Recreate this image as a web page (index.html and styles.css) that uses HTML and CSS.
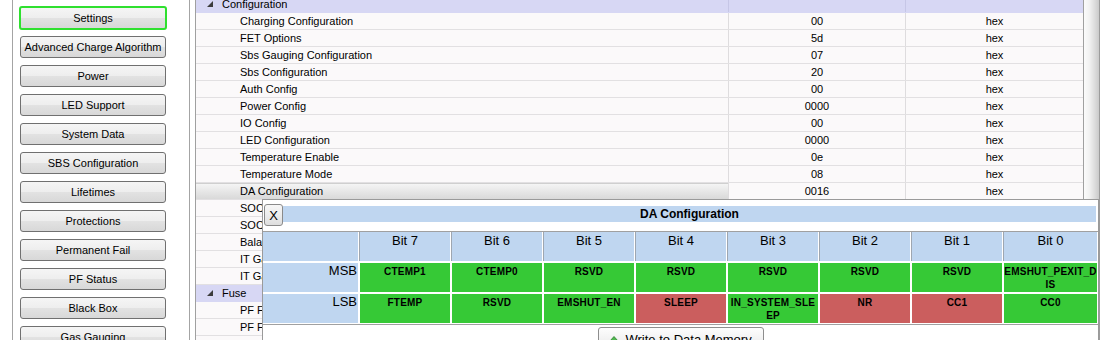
FILE: index.html
```html
<!DOCTYPE html>
<html>
<head>
<meta charset="utf-8">
<title>Data Memory</title>
<link rel="stylesheet" href="styles.css">
</head>
<body>
<div class="app">
  <nav class="sidebar">
    <button class="btn focus">Settings</button>
    <button class="btn">Advanced Charge Algorithm</button>
    <button class="btn">Power</button>
    <button class="btn">LED Support</button>
    <button class="btn">System Data</button>
    <button class="btn">SBS Configuration</button>
    <button class="btn">Lifetimes</button>
    <button class="btn">Protections</button>
    <button class="btn">Permanent Fail</button>
    <button class="btn">PF Status</button>
    <button class="btn">Black Box</button>
    <button class="btn">Gas Gauging</button>
  </nav>
  <div class="main">
    <div class="table">
      <div class="row section"><div class="cell name"><svg class="tri" width="6" height="6" viewBox="0 0 6 6"><polygon points="6,0 6,6 0,6" fill="#3c3c3c"/></svg>Configuration</div><div class="cell val"></div><div class="cell unit"></div></div>
      <div class="row"><div class="cell name">Charging Configuration</div><div class="cell val">00</div><div class="cell unit">hex</div></div>
      <div class="row"><div class="cell name">FET Options</div><div class="cell val">5d</div><div class="cell unit">hex</div></div>
      <div class="row"><div class="cell name">Sbs Gauging Configuration</div><div class="cell val">07</div><div class="cell unit">hex</div></div>
      <div class="row"><div class="cell name">Sbs Configuration</div><div class="cell val">20</div><div class="cell unit">hex</div></div>
      <div class="row"><div class="cell name">Auth Config</div><div class="cell val">00</div><div class="cell unit">hex</div></div>
      <div class="row"><div class="cell name">Power Config</div><div class="cell val">0000</div><div class="cell unit">hex</div></div>
      <div class="row"><div class="cell name">IO Config</div><div class="cell val">00</div><div class="cell unit">hex</div></div>
      <div class="row"><div class="cell name">LED Configuration</div><div class="cell val">0000</div><div class="cell unit">hex</div></div>
      <div class="row"><div class="cell name">Temperature Enable</div><div class="cell val">0e</div><div class="cell unit">hex</div></div>
      <div class="row"><div class="cell name">Temperature Mode</div><div class="cell val">08</div><div class="cell unit">hex</div></div>
      <div class="row selected"><div class="cell name">DA Configuration</div><div class="cell val">0016</div><div class="cell unit">hex</div></div>
      <div class="row"><div class="cell name">SOC Flag Config A</div><div class="cell val">0c8e</div><div class="cell unit">hex</div></div>
      <div class="row"><div class="cell name">SOC Flag Config B</div><div class="cell val">8c</div><div class="cell unit">hex</div></div>
      <div class="row"><div class="cell name">Balancing Configuration</div><div class="cell val">01</div><div class="cell unit">hex</div></div>
      <div class="row"><div class="cell name">IT Gauging Configuration</div><div class="cell val">d4fe</div><div class="cell unit">hex</div></div>
      <div class="row"><div class="cell name">IT Gauging Ext</div><div class="cell val">6e</div><div class="cell unit">hex</div></div>
      <div class="row section"><div class="cell name"><svg class="tri" width="6" height="6" viewBox="0 0 6 6"><polygon points="6,0 6,6 0,6" fill="#3c3c3c"/></svg>Fuse</div><div class="cell val"></div><div class="cell unit"></div></div>
      <div class="row"><div class="cell name">PF Fuse Min Voltage</div><div class="cell val">3500</div><div class="cell unit">mV</div></div>
      <div class="row"><div class="cell name">PF Fuse Blow Timeout</div><div class="cell val">30</div><div class="cell unit">s</div></div>
      <div class="row"><div class="cell name">PF Fuse Config</div><div class="cell val">00</div><div class="cell unit">hex</div></div>
    </div>
  </div>
  <div class="scroll"></div>
</div>

<div class="popup">
  <div class="ptitle">
    <button class="xbtn">X</button>
    <div class="pband">DA Configuration</div>
  </div>
  <div class="bits">
    <div class="hcell first"></div>
    <div class="hcell">Bit 7</div>
    <div class="hcell">Bit 6</div>
    <div class="hcell">Bit 5</div>
    <div class="hcell">Bit 4</div>
    <div class="hcell">Bit 3</div>
    <div class="hcell">Bit 2</div>
    <div class="hcell">Bit 1</div>
    <div class="hcell">Bit 0</div>

    <div class="rlabel">MSB</div>
    <div class="dcell g">CTEMP1</div>
    <div class="dcell g">CTEMP0</div>
    <div class="dcell g">RSVD</div>
    <div class="dcell g">RSVD</div>
    <div class="dcell g">RSVD</div>
    <div class="dcell g">RSVD</div>
    <div class="dcell g">RSVD</div>
    <div class="dcell g">EMSHUT_PEXIT_DIS</div>

    <div class="rlabel">LSB</div>
    <div class="dcell g">FTEMP</div>
    <div class="dcell g">RSVD</div>
    <div class="dcell g">EMSHUT_EN</div>
    <div class="dcell r">SLEEP</div>
    <div class="dcell g">IN_SYSTEM_SLEEP</div>
    <div class="dcell r">NR</div>
    <div class="dcell r">CC1</div>
    <div class="dcell g">CC0</div>
  </div>
  <div class="pfoot">
    <button class="wbtn"><svg class="wicon" width="10" height="11" viewBox="0 0 10 11"><polygon points="5,0.5 9.5,5.5 6.8,5.5 6.8,10.5 3.2,10.5 3.2,5.5 0.5,5.5" fill="#4fb84f" stroke="#2d7f2d" stroke-width="0.8"/></svg><span>Write to Data Memory</span></button>
  </div>
</div>
</body>
</html>
```

FILE: styles.css
```css
html, body {
  margin: 0;
  padding: 0;
}

body {
  width: 1106px;
  height: 340px;
  overflow: hidden;
  position: relative;
  background: #ffffff;
  font-family: "Liberation Sans", Arial, sans-serif;
  font-size: 11px;
  color: #000;
}

.app {
  display: flex;
  height: 340px;
}

/* ---------- sidebar ---------- */
.sidebar {
  margin-left: 12px;
  width: 178px;
  flex-shrink: 0;
  box-sizing: border-box;
  border-left: 1px solid #a4a4a4;
  border-right: 1px solid #a4a4a4;
  padding: 7px 0 0 7px;
  display: flex;
  flex-direction: column;
  gap: 7px;
}

.btn {
  flex-shrink: 0;
  width: 146px;
  height: 22px;
  box-sizing: border-box;
  padding: 0;
  border: 1px solid #707070;
  border-radius: 3px;
  background: linear-gradient(#f5f5f5 0%, #eeeeee 48%, #e2e2e2 52%, #d8d8d8 100%);
  font-family: "Liberation Sans", Arial, sans-serif;
  font-size: 11px;
  color: #000;
  white-space: nowrap;
  display: flex;
  align-items: center;
  justify-content: center;
}

.btn.focus {
  width: 148px;
  height: 24px;
  margin: -1px 0 -1px -1px;
  border: 2px solid #2fe02f;
}

/* ---------- main table ---------- */
.main {
  margin-left: 5px;
  width: 889px;
  flex-shrink: 0;
  box-sizing: border-box;
  border-left: 1px solid #a0a0a0;
  border-right: 1px solid #a0a0a0;
  overflow: hidden;
}

.table {
  margin-top: -4px;
}

.row {
  display: grid;
  grid-template-columns: 533px 177px 1fr;
  height: 17px;
  box-sizing: border-box;
  border-bottom: 1px solid #e2e0e2;
  background: #fbf9fa;
  line-height: 16px;
}

.cell {
  border-right: 1px solid #dedcde;
  white-space: nowrap;
  overflow: hidden;
}

.cell:last-child {
  border-right: 0;
}

.name {
  padding-left: 44px;
}

.val, .unit {
  text-align: center;
}

.section {
  background: #d7d7f4;
  border-bottom-color: #d7d7f4;
}

.section .cell {
  border-right-color: #c6c6e6;
}

.section .name {
  padding-left: 11px;
  display: flex;
  align-items: center;
}

.tri {
  flex-shrink: 0;
  margin-right: 9px;
}

.selected .name {
  background: linear-gradient(#f6f6f6, #d9d9d9);
  box-shadow: inset 0 1px 0 #cfcfcf;
}

.scroll {
  width: 16px;
  flex-shrink: 0;
  box-sizing: border-box;
  background: linear-gradient(90deg, #fbfbfb 0%, #f2f2f2 35%, #dadada 75%, #cacaca 100%);
  border-right: 1px solid #9c9c9c;
}

/* ---------- popup ---------- */
.popup {
  position: absolute;
  left: 262px;
  top: 199px;
  width: 837px;
  height: 160px;
  box-sizing: border-box;
  border: 1px solid #9a9a9a;
  background: #ffffff;
}

.ptitle {
  display: flex;
  align-items: flex-start;
  padding: 4px 1px 0 1px;
}

.xbtn {
  width: 19px;
  height: 22px;
  flex-shrink: 0;
  box-sizing: border-box;
  padding: 0;
  border: 1px solid #8a8a8a;
  border-radius: 3px;
  background: linear-gradient(#f7f7f7 0%, #ececec 50%, #dedede 100%);
  font-family: "Liberation Sans", Arial, sans-serif;
  font-size: 13px;
  color: #000;
  display: flex;
  align-items: center;
  justify-content: center;
}

.pband {
  flex: 1;
  margin-top: 2px;
  margin-right: 1px;
  height: 16px;
  background: #bfd6f0;
  text-align: center;
  font-weight: bold;
  font-size: 12px;
  line-height: 16px;
}

.bits {
  display: grid;
  grid-template-columns: 95px repeat(7, 90px) 93px;
  grid-auto-rows: 29px;
  column-gap: 2px;
  row-gap: 2px;
  margin-top: 5px;
  border-top: 1px solid #a0a0a0;
}

.hcell {
  background: #bfd6f0;
  font-size: 13px;
  line-height: 16px;
  padding-top: 1px;
  text-align: center;
  box-shadow: -1px 0 0 #9ea6b0;
}

.hcell.first {
  box-shadow: none;
}

.rlabel {
  background: #bfd6f0;
  font-size: 13px;
  line-height: 16px;
  text-align: right;
  padding-right: 1px;
}

.dcell {
  font-weight: bold;
  font-size: 10px;
  letter-spacing: 0.2px;
  line-height: 13px;
  padding-top: 2px;
  text-align: center;
  word-break: break-all;
  color: #000;
}

.g {
  background: #36c936;
}

.r {
  background: #cb5e5e;
}

.pfoot {
  margin-top: 1px;
  border-top: 1px solid #a0a0a0;
  padding-top: 2px;
  display: flex;
  justify-content: center;
}

.wbtn {
  width: 166px;
  height: 26px;
  box-sizing: border-box;
  border: 1px solid #8e8e8e;
  border-radius: 3px;
  background: linear-gradient(#fdfdfd, #e6e6e6);
  padding: 4px 0 0 10px;
  display: flex;
  align-items: flex-start;
  gap: 7px;
  font-family: "Liberation Sans", Arial, sans-serif;
  font-size: 13px;
  line-height: 16px;
  color: #000;
  white-space: nowrap;
}

.wicon {
  margin-top: 4px;
  flex-shrink: 0;
}
```
